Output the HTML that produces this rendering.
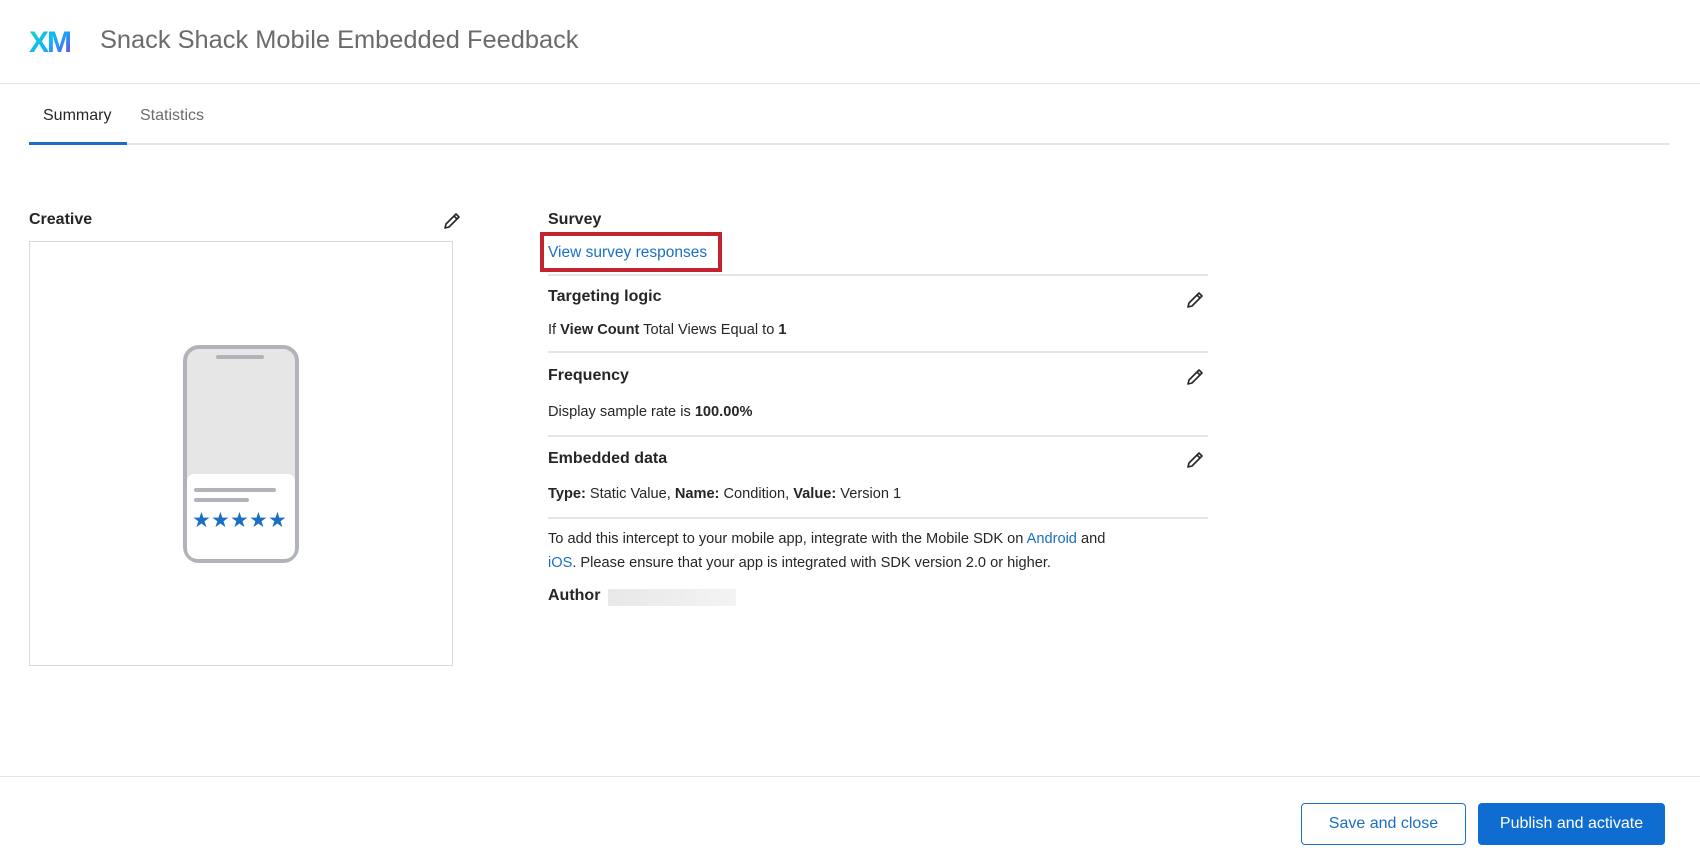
<!DOCTYPE html>
<html><head><meta charset="utf-8"><style>
*{margin:0;padding:0;box-sizing:border-box}
body{width:1700px;height:850px;background:#fff;font-family:"Liberation Sans",sans-serif;color:#262626;position:relative;overflow:hidden;font-size:14.6px}
.a{position:absolute;white-space:nowrap}
.b{font-weight:bold}
.line{position:absolute;height:2px;background:#e6e6e6}
.lk{color:#1a6fc4}
</style></head><body>
<div class="a b" style="left:29px;top:26px;font-size:30px;letter-spacing:-2px;background:linear-gradient(135deg,#21dbaa,#0ab4ff 50%,#7b3fe4);-webkit-background-clip:text;color:transparent">XM</div>
<div class="a" style="left:100px;top:26px;font-size:25.4px;color:#6b6b6b">Snack Shack Mobile Embedded Feedback</div>
<div class="line" style="left:0;top:83px;width:1700px;height:1px"></div>
<div class="a" style="left:43px;top:107px;font-size:16px;color:#262626">Summary</div>
<div class="a" style="left:140px;top:107px;font-size:16px;color:#6b6b6b">Statistics</div>
<div class="line" style="left:29px;top:143px;width:1641px"></div>
<div style="position:absolute;left:29px;top:142px;width:98px;height:3px;background:#1a6fc4"></div>

<div class="a b" style="left:29px;top:211px;font-size:16px">Creative</div>
<svg class="a" style="left:442px;top:211px" width="20" height="20" viewBox="0 0 20 20"><path d="M3 17l1-4L14 3l3 3L7 16z M12 5l3 3" fill="none" stroke="#262626" stroke-width="1.6" stroke-linejoin="round"/></svg>
<div style="position:absolute;left:29px;top:241px;width:424px;height:425px;border:1px solid #d9d9d9"></div>
<svg class="a" style="left:182px;top:344px" width="118" height="220" viewBox="0 0 118 220">
<rect x="3" y="3" width="112" height="214" rx="14" fill="#e6e6e6" stroke="#b0b4ba" stroke-width="4"/>
<rect x="34" y="11" width="48" height="4" rx="2" fill="#b0b4ba"/>
<path d="M5 138 Q5 130 13 130 H105 Q113 130 113 138 V203 Q113 215 101 215 H17 Q5 215 5 203Z" fill="#fff"/>
<rect x="12" y="144" width="82" height="4" rx="2" fill="#b0b4ba"/>
<rect x="12" y="154" width="55" height="4" rx="2" fill="#b0b4ba"/>
<g fill="#1a6fc4">
<text x="10" y="183" font-size="21">★</text><text x="29" y="183" font-size="21">★</text><text x="48" y="183" font-size="21">★</text><text x="67" y="183" font-size="21">★</text><text x="86" y="183" font-size="21">★</text></g>
</svg>

<div class="a b" style="left:548px;top:211px;font-size:16px">Survey</div>
<div style="position:absolute;left:540px;top:232px;width:182px;height:40px;border:4px solid #c1232f"></div>
<div class="a lk" style="left:548px;top:244px;font-size:15.5px">View survey responses</div>
<div class="line" style="left:548px;top:274px;width:660px"></div>
<div class="a b" style="left:548px;top:288px;font-size:16px">Targeting logic</div>
<svg class="a" style="left:1185px;top:290px" width="20" height="20" viewBox="0 0 20 20"><path d="M3 17l1-4L14 3l3 3L7 16z M12 5l3 3" fill="none" stroke="#262626" stroke-width="1.6" stroke-linejoin="round"/></svg>
<div class="a" style="left:548px;top:322px">If <b>View Count</b> Total Views Equal to <b>1</b></div>
<div class="line" style="left:548px;top:351px;width:660px"></div>
<div class="a b" style="left:548px;top:367px;font-size:16px">Frequency</div>
<svg class="a" style="left:1185px;top:367px" width="20" height="20" viewBox="0 0 20 20"><path d="M3 17l1-4L14 3l3 3L7 16z M12 5l3 3" fill="none" stroke="#262626" stroke-width="1.6" stroke-linejoin="round"/></svg>
<div class="a" style="left:548px;top:404px">Display sample rate is <b>100.00%</b></div>
<div class="line" style="left:548px;top:435px;width:660px"></div>
<div class="a b" style="left:548px;top:450px;font-size:16px">Embedded data</div>
<svg class="a" style="left:1185px;top:450px" width="20" height="20" viewBox="0 0 20 20"><path d="M3 17l1-4L14 3l3 3L7 16z M12 5l3 3" fill="none" stroke="#262626" stroke-width="1.6" stroke-linejoin="round"/></svg>
<div class="a" style="left:548px;top:486px"><b>Type:</b> Static Value, <b>Name:</b> Condition, <b>Value:</b> Version 1</div>
<div class="line" style="left:548px;top:517px;width:660px"></div>
<div class="a" style="left:548px;top:531px">To add this intercept to your mobile app, integrate with the Mobile SDK on <span class="lk">Android</span> and</div>
<div class="a" style="left:548px;top:555px"><span class="lk">iOS</span>. Please ensure that your app is integrated with SDK version 2.0 or higher.</div>
<div class="a b" style="left:548px;top:587px;font-size:16px">Author</div>
<div style="position:absolute;left:608px;top:589px;width:128px;height:17px;background:linear-gradient(90deg,#e8e8e8,#f3f3f3)"></div>

<div class="line" style="left:0;top:776px;width:1700px;height:1px"></div>
<div class="a" style="left:1301px;top:803px;width:165px;height:42px;border:1px solid #1a6fc4;border-radius:4px;color:#1a6fc4;font-size:16px;text-align:center;line-height:40px">Save and close</div>
<div class="a" style="left:1478px;top:803px;width:187px;height:42px;background:#0f6dd1;border-radius:4px;color:#fff;font-size:16px;text-align:center;line-height:42px">Publish and activate</div>
</body></html>
